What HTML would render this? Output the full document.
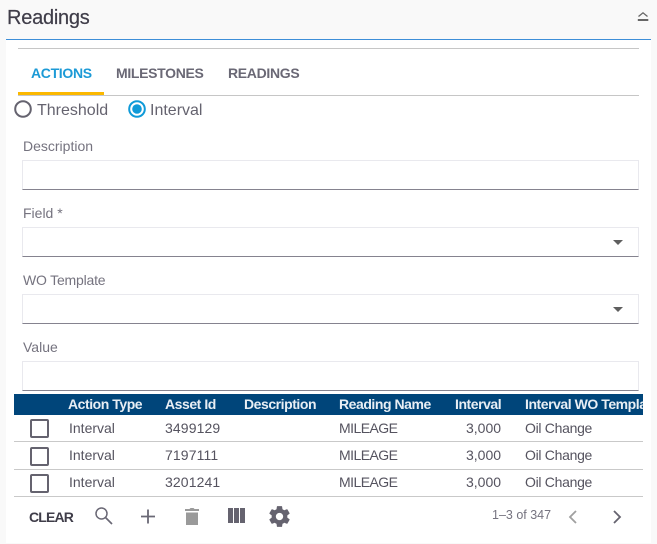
<!DOCTYPE html>
<html><head><meta charset="utf-8">
<style>
html,body{margin:0;padding:0;width:657px;height:544px;overflow:hidden;background:#f9f9f9;font-family:"Liberation Sans",sans-serif;color:#55535f}
.a{position:absolute;white-space:nowrap}
.in{position:absolute;left:22px;width:615px;height:28px;background:#fff;border:1px solid #e9e9ee;border-bottom:1px solid #85838f}
.lb{position:absolute;left:23px;font-size:14px;line-height:16px;color:#75737f;white-space:nowrap}
.th{position:absolute;top:396px;font-size:14px;line-height:17px;font-weight:bold;color:#e8eef4;white-space:nowrap;letter-spacing:-.45px}
.td{position:absolute;font-size:14px;line-height:16px;color:#55535f;white-space:nowrap}
.m{letter-spacing:-.55px}
.o{letter-spacing:-.3px}
.n{letter-spacing:.12px}
.ln{position:absolute;left:14px;width:629px;height:1px;background:#c9c9c9}
.cb{position:absolute;left:30px;width:15px;height:15px;border:2px solid #65636f;border-radius:2px}
.ar{position:absolute;left:613px;width:0;height:0;border-left:5px solid transparent;border-right:5px solid transparent;border-top:5px solid #5f5f5f}
.tab{position:absolute;top:65px;font-size:14px;line-height:16px;font-weight:bold;color:#6a6875;white-space:nowrap;letter-spacing:-.32px}
</style></head><body>
<div class="a" style="left:0;top:0;width:657px;height:39px;background:#f9f9f9"></div>
<div class="a" style="left:6px;top:40px;width:645px;height:503px;background:#fff"></div>
<div class="a" style="left:6px;top:39px;width:645px;height:1px;background:#3d8ed8"></div>
<div class="a" style="left:7px;top:6px;font-size:20px;line-height:25px;color:#3f3d49;-webkit-text-stroke:.2px #3f3d49;letter-spacing:-.25px">Readings</div>
<svg class="a" style="left:635px;top:11px" width="16" height="12" viewBox="0 0 16 12"><path d="M3.5 5.5 L8 1.8 L12.500 5.500" fill="none" stroke="#666" stroke-width="1.300"/><rect x="2" y="8" width="10.500" height="2" fill="#666" transform="translate(.8 0)"/></svg>

<div class="a" style="left:18px;top:48px;width:621px;height:1px;background:#c6c6c6"></div>
<div class="tab" style="left:31px;color:#1c9ad6">ACTIONS</div>
<div class="tab" style="left:116px">MILESTONES</div>
<div class="tab" style="left:228px">READINGS</div>
<div class="a" style="left:18px;top:95px;width:621px;height:1px;background:#c6c6c6"></div>
<div class="a" style="left:18px;top:92px;width:86px;height:3px;background:#fbb800"></div>

<svg class="a" style="left:14px;top:100px" width="18" height="18"><circle cx="9" cy="9" r="7.800" fill="none" stroke="#65636f" stroke-width="2"/></svg>
<div class="a" style="left:37px;top:101px;font-size:16px;line-height:19px;color:#65636f">Threshold</div>
<svg class="a" style="left:128px;top:100px" width="18" height="18"><circle cx="9" cy="9" r="7.800" fill="none" stroke="#0f9ad8" stroke-width="2"/><circle cx="9" cy="9" r="4.800" fill="#0f9ad8"/></svg>
<div class="a" style="left:150px;top:101px;font-size:16px;line-height:19px;color:#65636f">Interval</div>

<div class="lb" style="top:138px">Description</div>
<div class="in" style="top:160px"></div>
<div class="lb" style="top:205px">Field *</div>
<div class="in" style="top:227px"></div>
<div class="ar" style="top:240px"></div>
<div class="lb" style="top:272px;letter-spacing:-.2px">WO Template</div>
<div class="in" style="top:294px"></div>
<div class="ar" style="top:307px"></div>
<div class="lb" style="top:339px">Value</div>
<div class="in" style="top:361px"></div>

<div class="a" style="left:14px;top:394px;width:629px;height:21px;background:#00457a"></div>
<div class="th" style="left:68px">Action Type</div>
<div class="th" style="left:165px">Asset Id</div>
<div class="th" style="left:244px">Description</div>
<div class="th" style="left:339px">Reading Name</div>
<div class="th" style="left:455px">Interval</div>
<div class="a" style="left:525px;top:394px;width:118px;height:21px;overflow:hidden"><div class="th" style="left:0;top:2px">Interval WO Template</div></div>

<div class="cb" style="top:419px"></div>
<div class="td" style="left:69px;top:420px">Interval</div>
<div class="td n" style="left:165px;top:420px">3499129</div>
<div class="td m" style="left:339px;top:420px">MILEAGE</div>
<div class="td" style="left:466px;top:420px">3,000</div>
<div class="td o" style="left:525px;top:420px">Oil Change</div>
<div class="ln" style="top:441px"></div>

<div class="cb" style="top:447px"></div>
<div class="td" style="left:69px;top:447px">Interval</div>
<div class="td n" style="left:165px;top:447px">7197111</div>
<div class="td m" style="left:339px;top:447px">MILEAGE</div>
<div class="td" style="left:466px;top:447px">3,000</div>
<div class="td o" style="left:525px;top:447px">Oil Change</div>
<div class="ln" style="top:469px"></div>

<div class="cb" style="top:474px"></div>
<div class="td" style="left:69px;top:474px">Interval</div>
<div class="td n" style="left:165px;top:474px">3201241</div>
<div class="td m" style="left:339px;top:474px">MILEAGE</div>
<div class="td" style="left:466px;top:474px">3,000</div>
<div class="td o" style="left:525px;top:474px">Oil Change</div>
<div class="ln" style="top:496px"></div>

<div class="a" style="left:29px;top:509px;font-size:14px;line-height:16px;font-weight:bold;color:#3f3d49;letter-spacing:-.85px">CLEAR</div>
<svg class="a" style="left:94px;top:506px" width="20" height="20" viewBox="0 0 20 20"><circle cx="7.500" cy="7.500" r="5.500" fill="none" stroke="#6a6875" stroke-width="1.500"/><path d="M11.500 11.500 L18 18" stroke="#6a6875" stroke-width="1.700" fill="none"/></svg>
<svg class="a" style="left:140px;top:508px" width="16" height="16" viewBox="0 0 16 16"><path d="M1 8.500H15M8 1.500V15.500" stroke="#6a6875" stroke-width="1.800" fill="none"/></svg>
<svg class="a" style="left:184px;top:506px" width="16" height="20" viewBox="0 0 16 20"><path d="M1 3h4.500l1-1h3l1 1H15v2H1zM2 6.500h12V19H2z" fill="#9a9a9a"/></svg>
<svg class="a" style="left:228px;top:508px" width="18" height="15" viewBox="0 0 18 15"><path d="M0 0h5v15H0zM6 0h5v15H6zM12 0h5v15h-5z" fill="#65636f"/></svg>
<svg class="a" style="left:267px;top:504px" width="25" height="25" viewBox="0 0 24 24"><path d="M19.430 12.980c.04-.32.070-.64.070-.98s-.03-.66-.07-.98l2.110-1.650c.19-.15.24-.42.120-.64l-2-3.460c-.12-.22-.39-.30-.61-.22l-2.490 1c-.52-.40-1.080-.73-1.690-.98l-.38-2.650C14.460 2.180 14.250 2 14 2h-4c-.25 0-.46.180-.49.420l-.38 2.650c-.61.250-1.170.59-1.690.98l-2.490-1c-.23-.09-.49 0-.61.220l-2 3.460c-.13.220-.07.490.12.640l2.110 1.650c-.04.320-.07.650-.07.980s.03.660.07.980l-2.110 1.650c-.19.150-.24.420-.12.640l2 3.460c.12.220.39.300.61.220l2.490-1c.52.400 1.080.730 1.690.980l.38 2.650c.03.240.24.420.49.420h4c.25 0 .46-.180.49-.420l.38-2.650c.61-.250 1.170-.590 1.690-.980l2.490 1c.23.090.49 0 .61-.220l2-3.460c.12-.220.07-.490-.12-.640l-2.110-1.650zM12 15.500c-1.930 0-3.500-1.570-3.500-3.500s1.570-3.500 3.500-3.500 3.500 1.570 3.500 3.500-1.570 3.500-3.500 3.500z" fill="#65636f"/></svg>

<div class="a" style="left:492px;top:508px;font-size:12.500px;line-height:15px;color:#75737f">1–3 of 347</div>
<svg class="a" style="left:566px;top:509px" width="14" height="16" viewBox="0 0 14 16"><path d="M10 2 L4 8 L10 14" fill="none" stroke="#a0a0a0" stroke-width="1.800"/></svg>
<svg class="a" style="left:610px;top:509px" width="14" height="16" viewBox="0 0 14 16"><path d="M4 2 L10 8 L4 14" fill="none" stroke="#65636f" stroke-width="1.800"/></svg>
</body></html>
